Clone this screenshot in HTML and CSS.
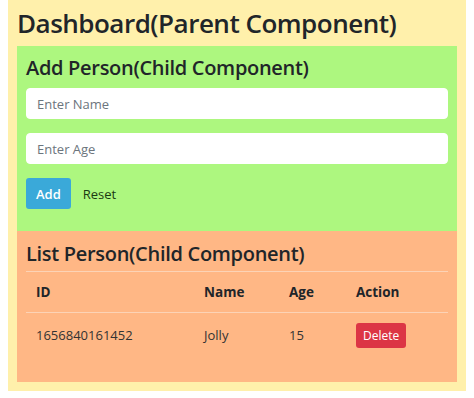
FILE: index.html
```html
<!DOCTYPE html>
<html lang="en">
<head>
    <meta charset="UTF-8">
    <title>Dashboard</title>
    <link rel="stylesheet" href="styles.css">
</head>
<body>
    <div class="dashboard">
        <h1>Dashboard(Parent Component)</h1>

        <div class="add-person">
            <h2>Add Person(Child Component)</h2>
            <input class="form-control" type="text" placeholder="Enter Name">
            <input class="form-control" type="text" placeholder="Enter Age">
            <div class="actions">
                <button class="btn btn-info">Add</button>
                <button class="btn btn-link">Reset</button>
            </div>
        </div>

        <div class="list-person">
            <h2>List Person(Child Component)</h2>
            <table class="table">
                <thead>
                    <tr>
                        <th class="col-id">ID</th>
                        <th class="col-name">Name</th>
                        <th class="col-age">Age</th>
                        <th>Action</th>
                    </tr>
                </thead>
                <tbody>
                    <tr>
                        <td>1656840161452</td>
                        <td>Jolly</td>
                        <td>15</td>
                        <td><button class="btn btn-danger">Delete</button></td>
                    </tr>
                </tbody>
            </table>
        </div>
    </div>
</body>
</html>
```

FILE: styles.css
```css
body {
    margin: 0;
    background-color: #fff;
    color: #212529;
    font-family: "Open Sans", "Noto Sans", sans-serif;
}

.dashboard {
    margin: 0 8px;
    padding: 0 9px 9px;
    background-color: #fff0ab;
}

h1 {
    margin: 0;
    font-size: 26px;
    font-weight: 600;
    line-height: 46px;
    letter-spacing: -0.5px;
}

h2 {
    margin: 0;
    font-size: 20px;
    font-weight: 600;
    letter-spacing: -0.3px;
}

.add-person {
    background-color: #adf77f;
    padding: 9px 9px 22px;
}

.add-person h2 {
    line-height: 26px;
    margin-bottom: 7px;
}

.form-control {
    display: block;
    box-sizing: border-box;
    width: 100%;
    height: 31px;
    margin-bottom: 14px;
    padding: 0 10px;
    border: 1px solid #fff;
    border-radius: 4px;
    font-family: inherit;
    font-size: 13px;
    background-color: #fff;
}

.form-control::placeholder {
    color: #6c757d;
}

.actions {
    display: flex;
    align-items: center;
    gap: 6px;
}

.btn {
    border: 0;
    border-radius: 3px;
    font-family: inherit;
    font-size: 13px;
    cursor: pointer;
}

.btn-info {
    height: 31px;
    padding: 0 10px;
    background-color: #3aa9d9;
    color: #fff;
    font-weight: 600;
}

.btn-link {
    background: none;
    color: #1b3a12;
    padding: 0 6px;
}

.list-person {
    background-color: #ffb785;
    padding: 10px 9px 25px;
}

.list-person h2 {
    line-height: 26px;
    padding-bottom: 4px;
    border-bottom: 1px solid #fcd3b6;
}

.table {
    width: 100%;
    border-collapse: collapse;
    font-size: 13px;
}

.table th,
.table td {
    text-align: left;
    padding: 0 10px;
}

.table th {
    height: 40px;
    font-size: 13.5px;
    font-weight: 700;
    border-bottom: 1px solid #fcd3b6;
}

.table td {
    height: 44px;
    color: #333;
}

.col-id {
    width: 148px;
}

.col-name {
    width: 65px;
}

.col-age {
    width: 47px;
}

.btn-danger {
    height: 25px;
    padding: 0 7px;
    background-color: #dc3545;
    color: #fff;
    font-size: 12px;
}
```
